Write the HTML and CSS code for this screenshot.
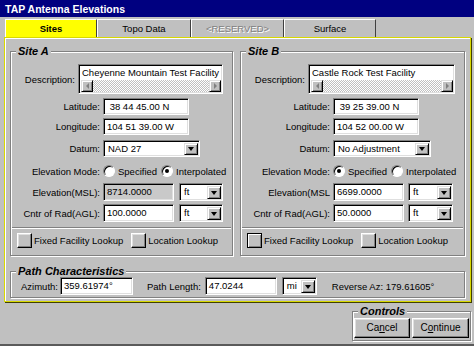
FILE: index.html
```html
<!DOCTYPE html>
<html>
<head>
<meta charset="utf-8">
<link rel="stylesheet" href="styles.css">
</head>
<body>
<div class="win">
  <div class="titlebar">TAP Antenna Elevations</div>
  <div class="tabs">
    <div class="tab active w92">Sites</div>
    <div class="tab w94">Topo Data</div>
    <div class="tab disabled w93">&lt;RESERVED&gt;</div>
    <div class="tab w92">Surface</div>
  </div>
  <div class="frame">
    <div class="sites">
      <fieldset class="group site-a">
        <legend>Site A</legend>
        <div class="rows">
          <div class="row">
            <span class="lbl short">Description:</span>
            <div class="field desc w145">
              <div class="desc-text">Cheyenne Mountain Test Facility</div>
              <div class="hscroll"><div class="sbtn"><i class="tri-l"></i></div><div class="track"></div><div class="sbtn"><i class="tri-r"></i></div></div>
            </div>
          </div>
          <div class="row r-lat"><span class="lbl">Latitude:</span><div class="field w86"> 38 44 45.00 N</div></div>
          <div class="row r-lon"><span class="lbl">Longitude:</span><div class="field w86">104 51 39.00 W</div></div>
          <div class="row r-datum"><span class="lbl">Datum:</span><div class="dd w97"><span class="val">NAD 27</span><span class="btn"><i class="tri-d"></i></span></div></div>
          <div class="row r-mode"><span class="lbl">Elevation Mode:</span><span class="radio"></span><span class="rlbl">Specified</span><span class="radio on"></span><span class="rlbl">Interpolated</span></div>
          <div class="row r-elev"><span class="lbl">Elevation(MSL):</span><div class="field tall w71 off">8714.0000</div><div class="dd tall w44 unit-a"><span class="val">ft</span><span class="btn"><i class="tri-d"></i></span></div></div>
          <div class="row r-cntr"><span class="lbl">Cntr of Rad(AGL):</span><div class="field tall w71">100.0000</div><div class="dd tall w44 unit-a"><span class="val">ft</span><span class="btn"><i class="tri-d"></i></span></div></div>
        </div>
        <div class="lookups">
          <span class="chk"></span><span class="chk-lbl">Fixed Facility Lookup</span>
          <span class="chk second"></span><span class="chk-lbl">Location Lookup</span>
        </div>
      </fieldset>
      <fieldset class="group site-b">
        <legend>Site B</legend>
        <div class="rows">
          <div class="row">
            <span class="lbl short">Description:</span>
            <div class="field desc w147">
              <div class="desc-text">Castle Rock Test Facility</div>
              <div class="hscroll"><div class="sbtn"><i class="tri-l"></i></div><div class="track"></div><div class="sbtn"><i class="tri-r"></i></div></div>
            </div>
          </div>
          <div class="row r-lat"><span class="lbl">Latitude:</span><div class="field w86"> 39 25 39.00 N</div></div>
          <div class="row r-lon"><span class="lbl">Longitude:</span><div class="field w86">104 52 00.00 W</div></div>
          <div class="row r-datum"><span class="lbl">Datum:</span><div class="dd w98"><span class="val">No Adjustment</span><span class="btn"><i class="tri-d"></i></span></div></div>
          <div class="row r-mode"><span class="lbl">Elevation Mode:</span><span class="radio on"></span><span class="rlbl">Specified</span><span class="radio"></span><span class="rlbl">Interpolated</span></div>
          <div class="row r-elev"><span class="lbl">Elevation(MSL</span><div class="field tall w71">6699.0000</div><div class="dd tall w45 unit-b"><span class="val">ft</span><span class="btn"><i class="tri-d"></i></span></div></div>
          <div class="row r-cntr"><span class="lbl">Cntr of Rad(AGL):</span><div class="field tall w71">50.0000</div><div class="dd tall w45 unit-b"><span class="val">ft</span><span class="btn"><i class="tri-d"></i></span></div></div>
        </div>
        <div class="lookups">
          <span class="chk focus"></span><span class="chk-lbl">Fixed Facility Lookup</span>
          <span class="chk second"></span><span class="chk-lbl">Location Lookup</span>
        </div>
      </fieldset>
    </div>
    <fieldset class="group path">
      <legend>Path Characteristics</legend>
      <div class="path-row">
        <span class="plbl">Azimuth:</span>
        <div class="field tall w73">359.61974°</div>
        <span class="plbl pl">Path Length:</span>
        <div class="field tall w72">47.0244</div>
        <div class="dd tall w35 unit-p"><span class="val">mi</span><span class="btn"><i class="tri-d"></i></span></div>
        <span class="rev">Reverse Az: 179.61605°</span>
      </div>
    </fieldset>
  </div>
  <div class="footer">
    <fieldset class="group controls">
      <legend>Controls</legend>
      <div class="ctl-row">
        <div class="pbtn w57">Ca<u>n</u>cel</div>
        <div class="pbtn w58">C<u>o</u>ntinue</div>
      </div>
    </fieldset>
  </div>
</div>
</body>
</html>
```
FILE: styles.css
```css
* { box-sizing: border-box; }
html, body { margin: 0; padding: 0; }
body {
  width: 474px; height: 346px; overflow: hidden;
  background: #c0c0c0;
  font-family: "Liberation Sans", Arial, sans-serif;
  font-size: 9.5px; color: #000;
}
.win { height: 346px; border-bottom: 2px solid #5a5a5a; display: flex; flex-direction: column; }
.titlebar {
  height: 17px; flex: none; background: #000080; color: #fff;
  font-weight: bold; font-size: 10.5px; line-height: 15px; padding: 2px 0 0 5px;
}
.tabs { height: 20px; flex: none; padding: 2px 0 0 5px; display: flex; }
.tab {
  height: 18px; line-height: 17px; text-align: center;
  border-top: 1px solid #fff; border-left: 1px solid #fff; border-right: 1px solid #404040;
  background: #c0c0c0;
}
.tab.active { background: #ffff00; font-weight: bold; }
.tab.disabled { color: #808080; text-shadow: 1px 1px 0 #fff; }
.w92 { width: 92px; } .w93 { width: 93px; } .w94 { width: 94px; }

.frame {
  flex: none; height: 265px; margin: 0 3px 0 4px;
  border: 1px solid #d8d800;
  box-shadow: 1px 1px 0 #404000, inset 1px 1px 0 #fff;
  padding: 7px 4px 3px 5px;
  overflow: hidden;
}
.sites { display: flex; gap: 7px; }
fieldset.group {
  margin: 0; padding: 0; min-width: 0;
  border: 1px solid #808080;
  box-shadow: 1px 1px 0 #fff, inset 1px 1px 0 #fff;
}
legend {
  font-weight: bold; font-style: italic; font-size: 11px; line-height: 12px;
  padding: 0 2px; margin-left: 5px; background: #c0c0c0;
}
fieldset.site-a { width: 223px; }
fieldset.site-b { width: 225px; }
.rows { padding-top: 7px; }
.row { display: flex; align-items: center; }
.r-lat { margin-top: 4px; }
.r-lon { margin-top: 3px; }
.r-datum { margin-top: 5px; }
.r-mode { margin-top: 6px; height: 16px; }
.r-elev { margin-top: 4px; }
.r-cntr { margin-top: 3px; }
.lbl { width: 89px; flex: none; text-align: right; margin-right: 3px; white-space: nowrap; }
.lbl.short { width: 64px; }

.field {
  flex: none; background: #fff;
  border: 1px solid; border-color: #808080 #fff #fff #808080;
  box-shadow: inset 1px 1px 0 #000, inset -1px -1px 0 #dfdfdf;
  height: 17px; line-height: 15px; padding: 0 3px; white-space: pre; overflow: hidden;
}
.field.tall, .dd.tall { height: 18px; line-height: 16px; }
.field.off { background: #c9c9c9; }
.w35 { width: 35px; } .w44 { width: 44px; } .w45 { width: 45px; }
.w71 { width: 71px; } .w72 { width: 72px; } .w73 { width: 73px; }
.w86 { width: 86px; } .w97 { width: 97px; } .w98 { width: 98px; }
.w145 { width: 145px; } .w147 { width: 147px; }
.w57 { width: 57px; } .w58 { width: 58px; }

.desc { height: 30px; display: flex; flex-direction: column; padding: 2px 1px 1px 2px; }
.desc-text { flex: 1; line-height: 12px; padding-left: 1px; white-space: nowrap; }
.hscroll { height: 12px; display: flex; }
.track { flex: 1; background: repeating-conic-gradient(#fff 0 25%, #c0c0c0 0 50%) 0 0 / 2px 2px; }
.sbtn, .dd .btn {
  background: #c0c0c0;
  border: 1px solid; border-color: #dfdfdf #000 #000 #dfdfdf;
  box-shadow: inset 1px 1px 0 #fff, inset -1px -1px 0 #808080;
  display: flex; align-items: center; justify-content: center;
}
.sbtn { width: 12px; height: 12px; }
.tri-l { width: 0; height: 0; border-top: 3px solid transparent; border-bottom: 3px solid transparent; border-right: 3px solid #808080; }
.tri-r { width: 0; height: 0; border-top: 3px solid transparent; border-bottom: 3px solid transparent; border-left: 3px solid #808080; }
.tri-d { width: 0; height: 0; border-left: 3.5px solid transparent; border-right: 3.5px solid transparent; border-top: 4px solid #000; }

.dd {
  flex: none; display: flex; background: #fff;
  border: 1px solid; border-color: #808080 #fff #fff #808080;
  box-shadow: inset 1px 1px 0 #000, inset -1px -1px 0 #dfdfdf;
  height: 17px; padding: 2px 1px 1px 2px;
}
.dd .val { flex: 1; line-height: 12px; padding-left: 2px; white-space: nowrap; overflow: hidden; }
.dd .btn { width: 14px; flex: none; }
.unit-a { margin-left: 5px; }
.unit-b { margin-left: 4px; }

.radio {
  flex: none; width: 12px; height: 12px; border-radius: 50%; background: #fff;
  border: 1px solid; border-color: #808080 #fff #fff #808080;
  box-shadow: inset 1px 1px 0 #000;
  display: flex; align-items: center; justify-content: center;
}
.radio.on::after { content: ""; width: 4px; height: 4px; border-radius: 50%; background: #000; }
.rlbl { margin: 0 4px 0 3px; white-space: nowrap; }

.lookups {
  margin: 5px 1px 0; display: flex; align-items: center;
  border-top: 1px solid #808080; box-shadow: inset 0 1px 0 #fff;
  padding: 5px 0 7px 5px;
}
.chk {
  flex: none; width: 15px; height: 15px; background: #c0c0c0;
  border: 1px solid; border-color: #fff #000 #000 #fff;
  box-shadow: inset -1px -1px 0 #808080, inset 1px 1px 0 #dfdfdf;
}
.chk.focus { border-color: #000; box-shadow: inset 1px 1px 0 #fff, inset -1px -1px 0 #808080; }
.chk.second { margin-left: 8px; }
.chk-lbl { margin-left: 2px; white-space: nowrap; }

fieldset.path { width: 455px; margin-top: 9px; }
.path-row { display: flex; align-items: center; padding: 0 0 2px 10px; }
.plbl { margin-right: 2px; white-space: nowrap; }
.plbl.pl { margin-left: 14px; margin-right: 4px; }
.unit-p { margin-left: 5px; }
.rev { margin-left: 15px; white-space: nowrap; }

.footer { flex: 1; display: flex; justify-content: flex-end; align-items: flex-start; padding: 3px 3px 0 0; }
fieldset.controls { width: 119px; }
.ctl-row { display: flex; gap: 2px; padding: 1px 1px 2px 1px; }
.pbtn {
  height: 20px; line-height: 18px; text-align: center; background: #c0c0c0;
  border: 1px solid; border-color: #fff #000 #000 #fff;
  box-shadow: inset -1px -1px 0 #808080, inset 1px 1px 0 #dfdfdf;
  font-size: 10px;
}
```
